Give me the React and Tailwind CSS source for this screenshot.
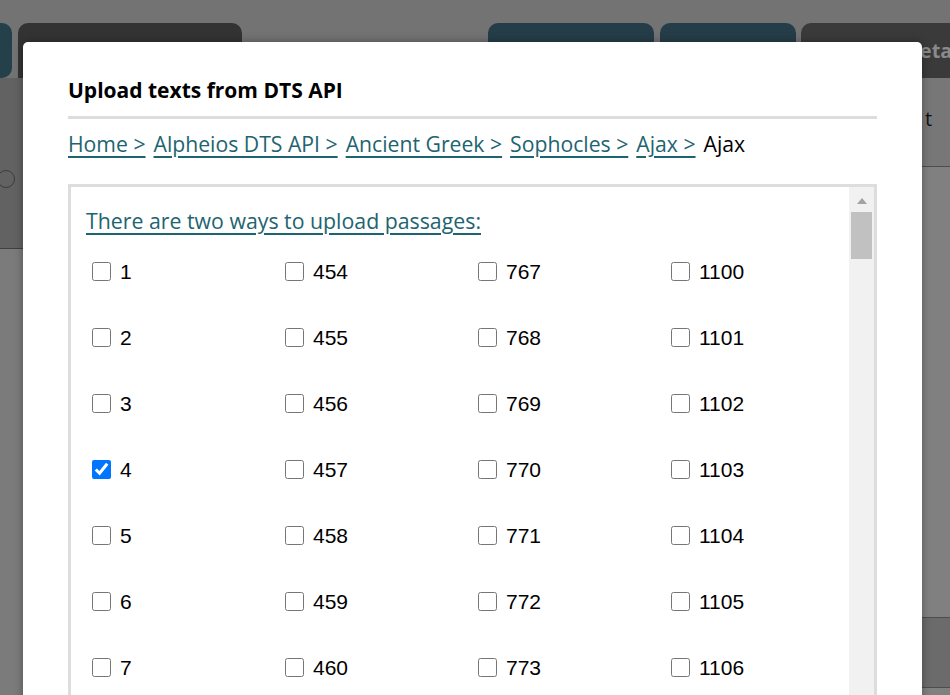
import React from "react";

const crumbs = ["Home >", "Alpheios DTS API >", "Ancient Greek >", "Sophocles >", "Ajax >"];

const cols = [
  [1, 2, 3, 4, 5, 6, 7],
  [454, 455, 456, 457, 458, 459, 460],
  [767, 768, 769, 770, 771, 772, 773],
  [1100, 1101, 1102, 1103, 1104, 1105, 1106],
];

function Item({ n }) {
  return (
    <label className="flex h-[66px] w-[193px] shrink-0 items-center gap-[9px]">
      <input
        type="checkbox"
        defaultChecked={n === 4}
        className="m-0 h-[19px] w-[19px] shrink-0"
      />
      <span className="text-[21px] leading-none text-black" style={{ fontFamily: '"Liberation Sans", Arial, sans-serif' }}>
        {n}
      </span>
    </label>
  );
}

export default function App() {
  const rows = [];
  for (let r = 0; r < 7; r++) {
    rows.push(cols.map((c) => c[r]));
  }
  return (
    <div
      className="relative h-[695px] w-[950px] overflow-hidden bg-[#737373]"
      style={{ fontFamily: '"Open Sans", "Noto Sans", sans-serif' }}
    >
      {/* background page */}
      <div className="h-[23px]" />
      <div className="flex h-[55px] items-stretch">
        <div className="w-[12px] shrink-0 rounded-r-[10px] bg-[#24404b]" />
        <div className="ml-[6px] w-[224px] shrink-0 rounded-t-[10px] bg-[#333333]" />
        <div className="ml-[246px] w-[166px] shrink-0 rounded-t-[10px] bg-[#253d48]" />
        <div className="ml-[6px] w-[136px] shrink-0 rounded-t-[10px] bg-[#253d48]" />
        <div className="ml-[5px] flex w-[200px] shrink-0 items-center rounded-tl-[10px] bg-[#3a3a3a] pl-[100px] text-[20px] font-bold text-[#8a8a8a]">
          Metadata
        </div>
      </div>
      <div className="flex h-[617px] justify-between">
        <div className="flex w-[23px] flex-col">
          <div className="flex h-[171px] items-center border-b border-[#404040] bg-[#626262] pt-[32px]">
            <div className="ml-[-3px] h-[18px] w-[18px] shrink-0 rounded-full border border-[#3c3c3c]" />
          </div>
          <div className="flex-1 bg-[#7b7b7b]" />
        </div>
        <div className="flex w-[28px] flex-col">
          <div className="flex h-[89px] items-start border-b border-[#4d4d4d] bg-[#777777] pl-[3px] pt-[26px] text-[20px] text-[#111]">
            t
          </div>
          <div className="h-[451px] border-b border-[#4d4d4d] bg-[#808080]" />
          <div className="h-[70px] border-b border-[#4d4d4d] bg-[#6b6b6b]" />
          <div className="flex-1 bg-[#808080]" />
        </div>
      </div>

      {/* modal */}
      <div className="absolute left-[23px] top-[42px] h-[700px] w-[899px] rounded-t-[5px] bg-white px-[45px] pt-[34px] shadow-[0_0_8px_rgba(0,0,0,0.35)]">
        <h2 className="border-b-[3px] border-[#dddddd] pb-[12px] text-[21px] font-bold leading-[28px] text-black">
          Upload texts from DTS API
        </h2>
        <div className="mt-[11px] flex flex-wrap gap-x-[8px] text-[21.2px] leading-[28px]">
          {crumbs.map((c) => (
            <a key={c} href="#" className="text-[#1d6470] underline underline-offset-[4px]">
              {c}
            </a>
          ))}
          <span className="text-black">Ajax</span>
        </div>
        <div className="mt-[26px] flex h-[600px] border-[3px] border-[#dddddd]">
          <div className="min-w-0 flex-1 overflow-hidden pl-[15px] pt-[20px]">
            <a href="#" className="text-[21.3px] leading-[28px] text-[#1d6470] underline underline-offset-[4px]">
              There are two ways to upload passages:
            </a>
            <div className="mt-[3px] pl-[6px]">
              {rows.map((r, i) => (
                <div key={i} className="flex">
                  {r.map((n) => (
                    <Item key={n} n={n} />
                  ))}
                </div>
              ))}
            </div>
          </div>
          <div className="flex w-[25px] shrink-0 flex-col items-center bg-[#f1f1f1]">
            <svg width="12" height="8" viewBox="0 0 12 8" className="mt-[10px]">
              <polygon points="6,1 11,7 1,7" fill="#a3a3a3" />
            </svg>
            <div className="mt-[7px] h-[47px] w-[21px] bg-[#c1c1c1]" />
          </div>
        </div>
      </div>
    </div>
  );
}
